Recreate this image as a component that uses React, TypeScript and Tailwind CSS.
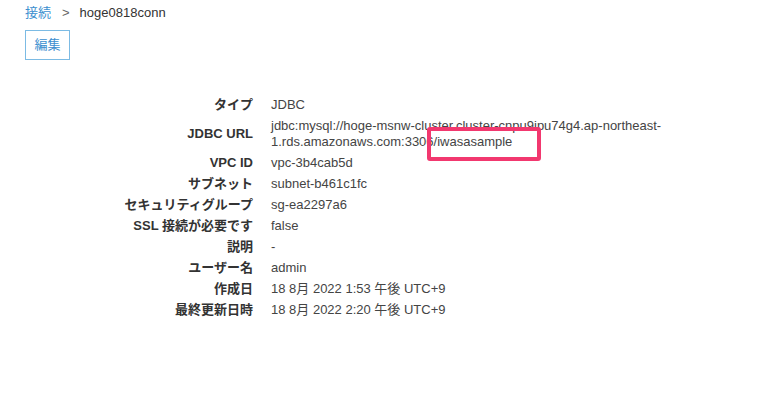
import React from 'react';

const font = { fontFamily: '"Liberation Sans", "Noto Sans CJK JP", sans-serif' };

const rows: { label: string; value: React.ReactNode }[] = [
  { label: 'タイプ', value: 'JDBC' },
  {
    label: 'JDBC URL',
    value: (
      <span className="relative block">
        jdbc:mysql://hoge-msnw-cluster.cluster-cnpu9ipu74g4.ap-northeast-
        <br />
        1.rds.amazonaws.com:3306/iwasasample
        <span className="absolute left-[156px] top-[9px] h-[34px] w-[114px] rounded-[3px] border-[4px] border-[#f2386f]" />
      </span>
    ),
  },
  { label: 'VPC ID', value: 'vpc-3b4cab5d' },
  { label: 'サブネット', value: 'subnet-b461c1fc' },
  { label: 'セキュリティグループ', value: 'sg-ea2297a6' },
  { label: 'SSL 接続が必要です', value: 'false' },
  { label: '説明', value: '-' },
  { label: 'ユーザー名', value: 'admin' },
  { label: '作成日', value: '18 8月 2022 1:53 午後 UTC+9' },
  { label: '最終更新日時', value: '18 8月 2022 2:20 午後 UTC+9' },
];

export default function App() {
  return (
    <div className="h-[404px] w-[768px] overflow-hidden bg-white px-[25px] pt-[4px] text-[13px]" style={font}>
      <div className="flex h-[17px] items-center leading-[16px]">
        <span className="text-[#3c8fcf]">接続</span>
        <span className="ml-[11px] text-[#666]">&gt;</span>
        <span className="ml-[10px] text-[#333]">hoge0818conn</span>
      </div>
      <div className="mt-[9px]">
        <button className="h-[30px] w-[45px] border border-[#7cbbe4] bg-white text-[13px] text-[#3c8fcf]">
          編集
        </button>
      </div>
      <div className="mt-[34px]">
        {rows.map((r) => (
          <div key={r.label} className="flex items-center py-[2.5px] leading-[16px]">
            <div className="w-[228px] shrink-0 text-right font-bold text-[#333]">{r.label}</div>
            <div className="ml-[18px] w-[410px] text-[#444]">{r.value}</div>
          </div>
        ))}
      </div>
    </div>
  );
}
